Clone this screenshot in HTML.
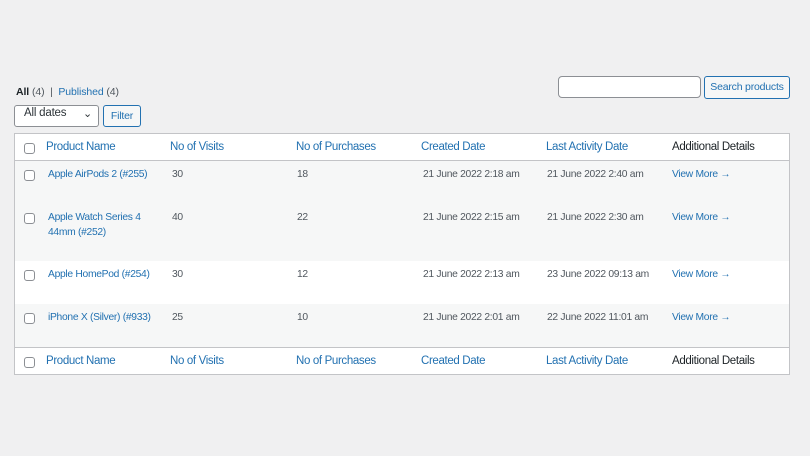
<!DOCTYPE html>
<html><head><style>
*{box-sizing:border-box;margin:0;padding:0}
body{width:810px;height:456px;background:#f0f0f1;font-family:"Liberation Sans",sans-serif;color:#50575e;position:relative;overflow:hidden}
a{color:#2271b1;text-decoration:none}
.abs{position:absolute}
.sub{left:16px;top:86px;font-size:10.5px;letter-spacing:-0.1px;color:#50575e}
.sub b{color:#1d2327}
.sel{left:14px;top:105px;width:85px;height:22px;border:1px solid #8c8f94;border-radius:3px;background:#fff;font-size:11.5px;letter-spacing:-0.2px;color:#2c3338;padding:1px 9px}
.btn{border:1px solid #2271b1;border-radius:3px;background:#f6f7f7;color:#2271b1;font-size:10.5px;letter-spacing:-0.2px;text-align:center}
.search{left:558px;top:76px;width:143px;height:22px;border:1px solid #8c8f94;border-radius:4px;background:#fff}
.table{left:14px;top:133px;width:776px;height:242px;border:1px solid #c3c4c7;background:#fff}
.row{position:absolute;left:0;width:774px}
.cb{position:absolute;left:9px;width:11px;height:11px;border:1px solid #8c8f94;border-radius:3px;background:#fff}
.c{position:absolute;font-size:10.3px;line-height:15px;letter-spacing:-0.3px}
.h{font-size:11.5px;letter-spacing:-0.35px}
</style></head><body>
<div class="abs sub"><b>All</b> (4) &nbsp;|&nbsp; <a>Published</a> (4)</div>
<div class="abs sel">All dates<span style="position:absolute;left:68px;top:1px;font-size:11px">&#8964;</span></div>
<div class="abs btn" style="left:103px;top:105px;width:38px;height:22px;line-height:20px">Filter</div>
<div class="abs search"></div>
<div class="abs btn" style="left:704px;top:76px;width:86px;height:23px;line-height:21px">Search products</div>
<div class="abs table">
 <div class="row" style="top:0;height:27px;border-bottom:1px solid #c3c4c7">
  <div class="cb" style="top:9px"></div>
  <a class="c h" style="left:31px;top:6px">Product Name</a>
  <a class="c h" style="left:155px;top:6px">No of Visits</a>
  <a class="c h" style="left:281px;top:6px">No of Purchases</a>
  <a class="c h" style="left:406px;top:6px">Created Date</a>
  <a class="c h" style="left:531px;top:6px">Last Activity Date</a>
  <div class="c h" style="left:657px;top:6px;color:#1d2327">Additional Details</div>
 </div>
 <div class="row" style="top:27px;height:43px;background:#f6f7f7">
  <div class="cb" style="top:9px"></div>
  <a class="c" style="left:33px;top:6px">Apple AirPods 2 (#255)</a>
  <div class="c" style="left:157px;top:6px">30</div><div class="c" style="left:282px;top:6px">18</div>
  <div class="c" style="left:408px;top:6px">21 June 2022 2:18 am</div><div class="c" style="left:532px;top:6px">21 June 2022 2:40 am</div>
  <a class="c" style="left:657px;top:6px">View More &#8594;</a>
 </div>
 <div class="row" style="top:70px;height:57px;background:#f6f7f7">
  <div class="cb" style="top:9px"></div>
  <a class="c" style="left:33px;top:6px;width:100px">Apple Watch Series 4 44mm (#252)</a>
  <div class="c" style="left:157px;top:6px">40</div><div class="c" style="left:282px;top:6px">22</div>
  <div class="c" style="left:408px;top:6px">21 June 2022 2:15 am</div><div class="c" style="left:532px;top:6px">21 June 2022 2:30 am</div>
  <a class="c" style="left:657px;top:6px">View More &#8594;</a>
 </div>
 <div class="row" style="top:127px;height:43px;background:#fff">
  <div class="cb" style="top:9px"></div>
  <a class="c" style="left:33px;top:6px">Apple HomePod (#254)</a>
  <div class="c" style="left:157px;top:6px">30</div><div class="c" style="left:282px;top:6px">12</div>
  <div class="c" style="left:408px;top:6px">21 June 2022 2:13 am</div><div class="c" style="left:532px;top:6px">23 June 2022 09:13 am</div>
  <a class="c" style="left:657px;top:6px">View More &#8594;</a>
 </div>
 <div class="row" style="top:170px;height:43px;background:#f6f7f7">
  <div class="cb" style="top:9px"></div>
  <a class="c" style="left:33px;top:6px">iPhone X (Silver) (#933)</a>
  <div class="c" style="left:157px;top:6px">25</div><div class="c" style="left:282px;top:6px">10</div>
  <div class="c" style="left:408px;top:6px">21 June 2022 2:01 am</div><div class="c" style="left:532px;top:6px">22 June 2022 11:01 am</div>
  <a class="c" style="left:657px;top:6px">View More &#8594;</a>
 </div>
 <div class="row" style="top:213px;height:27px;border-top:1px solid #c3c4c7">
  <div class="cb" style="top:9px"></div>
  <a class="c h" style="left:31px;top:6px">Product Name</a>
  <a class="c h" style="left:155px;top:6px">No of Visits</a>
  <a class="c h" style="left:281px;top:6px">No of Purchases</a>
  <a class="c h" style="left:406px;top:6px">Created Date</a>
  <a class="c h" style="left:531px;top:6px">Last Activity Date</a>
  <div class="c h" style="left:657px;top:6px;color:#1d2327">Additional Details</div>
 </div>
</div>
</body></html>
